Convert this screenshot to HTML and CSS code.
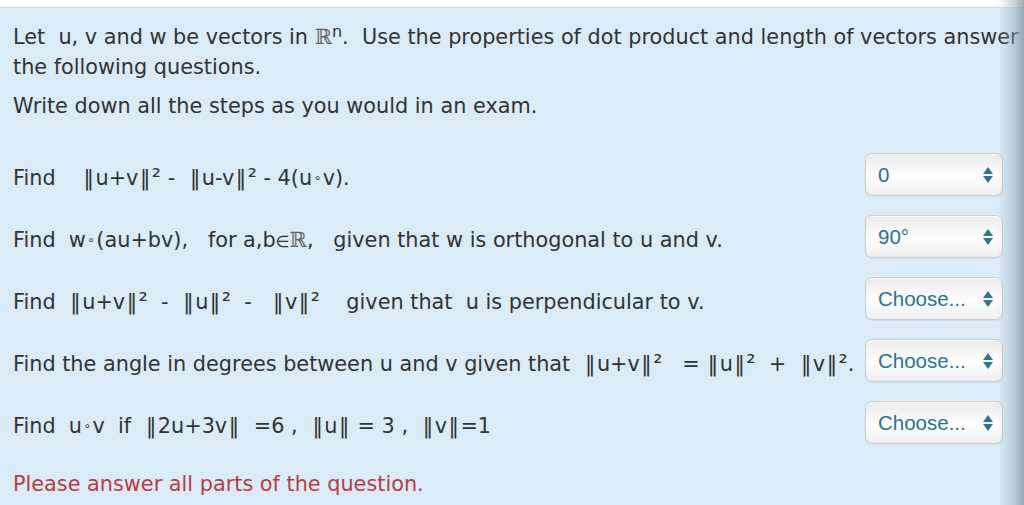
FILE: index.html
```html
<!DOCTYPE html>
<html>
<head>
<meta charset="utf-8">
<link rel="stylesheet" href="styles.css">
</head>
<body>
<div class="page">
  <div class="panel">
    <p class="intro">Let&nbsp; u, v and w be vectors in <span class="bb">ℝ</span><sup class="sup">n</sup>.&nbsp; Use the properties of dot product and length of vectors answer<br>the following questions.</p>
    <p class="intro2">Write down all the steps as you would in an exam.</p>

    <div class="rows">
      <div class="row">
        <span class="q">Find &nbsp; &nbsp;<span class="n">‖</span>u+v<span class="n">‖</span><span class="sq">²</span> - &nbsp;<span class="n">‖</span>u-v<span class="n">‖</span><span class="sq">²</span> - 4(u<span class="dot">∘</span>v).</span>
        <div class="sel"><span class="val">0</span><span class="arr"></span></div>
      </div>
      <div class="row">
        <span class="q">Find &nbsp;w<span class="dot">∘</span>(au+bv), &nbsp; for a,b<span class="el">∈</span><span class="bb">ℝ</span>, &nbsp; given that w is orthogonal to u and v.</span>
        <div class="sel"><span class="val">90°</span><span class="arr"></span></div>
      </div>
      <div class="row">
        <span class="q">Find &nbsp;<span class="n">‖</span>u+v<span class="n">‖</span><span class="sq">²</span> &nbsp;- &nbsp;<span class="n">‖</span>u<span class="n">‖</span><span class="sq">²</span> &nbsp;- &nbsp; <span class="n">‖</span>v<span class="n">‖</span><span class="sq">²</span> &nbsp; &nbsp;given that &nbsp;u is perpendicular to v.</span>
        <div class="sel"><span class="val">Choose...</span><span class="arr"></span></div>
      </div>
      <div class="row">
        <span class="q">Find the angle in degrees between u and v given that &nbsp;<span class="n">‖</span>u+v<span class="n">‖</span><span class="sq">²</span> &nbsp; = <span class="n">‖</span>u<span class="n">‖</span><span class="sq">²</span> &nbsp;+ &nbsp;<span class="n">‖</span>v<span class="n">‖</span><span class="sq">²</span>.</span>
        <div class="sel"><span class="val">Choose...</span><span class="arr"></span></div>
      </div>
      <div class="row">
        <span class="q">Find &nbsp;u<span class="dot">∘</span>v &nbsp;if &nbsp;<span class="n">‖</span>2u+3v<span class="n">‖</span> &nbsp;=6 , &nbsp;<span class="n">‖</span>u<span class="n">‖</span> = 3 , &nbsp;<span class="n">‖</span>v<span class="n">‖</span>=1</span>
        <div class="sel"><span class="val">Choose...</span><span class="arr"></span></div>
      </div>
    </div>

    <p class="warn">Please answer all parts of the question.</p>
    <div class="edge"></div>
  </div>
</div>
</body>
</html>
```
FILE: styles.css
```css
html, body {
  margin: 0;
  padding: 0;
  background: #ffffff;
}
.page {
  width: 1024px;
  height: 505px;
  overflow: hidden;
  padding-top: 7px;
  box-sizing: border-box;
}
.panel {
  position: relative;
  background: #d9ecf8;
  border-top: 1px solid #c3e2f1;
  height: 520px;
  padding: 14px 0 0 13px;
  box-sizing: border-box;
  font-family: "DejaVu Sans", Verdana, sans-serif;
  font-size: 20.8px;
  color: #333333;
}
.intro {
  margin: 0;
  line-height: 30px;
  white-space: nowrap;
}
.intro2 {
  margin: 9px 0 0 0;
  line-height: 30px;
}
.bb {
  font-family: "DejaVu Serif", "Liberation Serif", serif;
  color: #666;
}
.sup {
  font-size: 16px;
  vertical-align: 7px;
  line-height: 0;
}
.n {
  margin: 0 1.5px;
}
.sq {
  font-size: 23px;
  line-height: 0;
}
.dot {
  font-size: 12px;
  vertical-align: 3px;
  margin: 0 1.5px;
}
.el {
  font-size: 16px;
}
.rows {
  margin-top: 32px;
  display: flex;
  flex-direction: column;
  gap: 19px;
  width: 990px;
}
.row {
  display: flex;
  align-items: center;
  justify-content: space-between;
  height: 43px;
}
.q {
  white-space: nowrap;
  padding-top: 7px;
}
.sel {
  width: 138px;
  height: 43px;
  box-sizing: border-box;
  border: 1px solid #c9cdd0;
  border-radius: 7px;
  background: linear-gradient(#ececec 0%, #f7f7f7 35%, #ffffff 55%, #eeeeee 100%);
  box-shadow: inset 0 1px 0 #ffffff, 0 1px 1px rgba(0,0,0,0.06);
  display: flex;
  align-items: center;
  justify-content: space-between;
  padding: 0 9px 0 12px;
  font-family: "Liberation Sans", Arial, sans-serif;
  font-size: 20.5px;
  color: #267590;
  flex-shrink: 0;
}
.arr {
  width: 10px;
  height: 18px;
  position: relative;
}
.arr::before, .arr::after {
  content: "";
  position: absolute;
  left: 0;
  border-left: 5px solid transparent;
  border-right: 5px solid transparent;
}
.arr::before {
  top: 1px;
  border-bottom: 7px solid #2b7893;
}
.arr::after {
  bottom: 1px;
  border-top: 7px solid #2b7893;
}
.warn {
  margin: 25px 0 0 0;
  color: #c0393f;
  line-height: 30px;
}
.edge {
  position: absolute;
  top: -8px;
  right: 0;
  width: 26px;
  height: 540px;
  background: linear-gradient(to right, rgba(160,180,195,0) 0%, rgba(150,168,182,0.45) 60%, rgba(140,155,168,0.85) 100%);
}
```
